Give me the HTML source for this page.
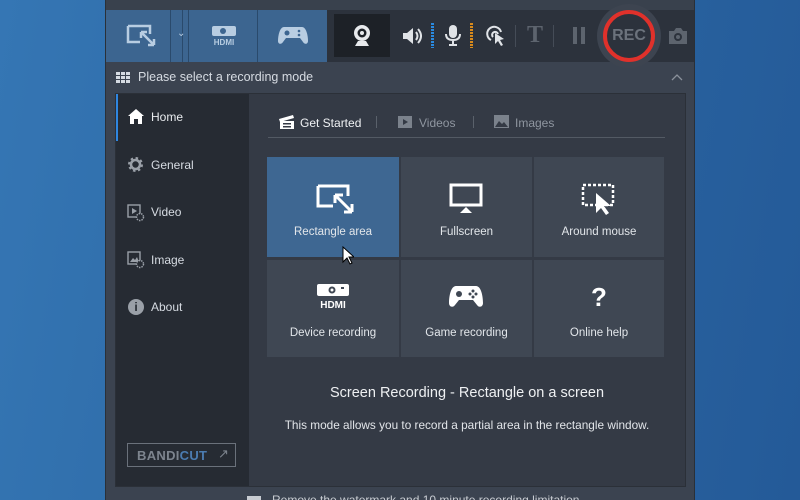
<!DOCTYPE html>
<html style="width:800px;height:500px;overflow:hidden"><head><meta charset="utf-8"><style>
*{margin:0;padding:0;box-sizing:border-box}
body{width:800px;height:500px;overflow:hidden;background:linear-gradient(100deg,#3576b4 0%,#2d6aa6 40%,#245a98 100%);font-family:"Liberation Sans",sans-serif;position:relative}
.a{position:absolute}
.t{color:#d6dbe2;font-size:12px}
.tile{position:absolute;background:#3f4753;color:#e2e6ea;font-size:11.5px;text-align:center}
.tile span{position:absolute;left:0;right:0}
</style></head><body>
<!-- window -->
<div class="a" style="left:105px;top:0;width:590px;height:500px;background:#3b4350;border-left:1px solid #2a3038;border-right:1px solid #2a3038"></div>
<div class="a" style="left:106px;top:0;width:588px;height:10px;background:#39414d"></div>
<!-- toolbar -->
<div class="a" style="left:106px;top:10px;width:588px;height:52px;background:#2c323c"></div>
<div class="a" style="left:106px;top:10px;width:221px;height:52px;background:#3c6590"></div>
<div class="a" style="left:170px;top:10px;width:1px;height:52px;background:#2a4a6c"></div>
<div class="a" style="left:182px;top:10px;width:1px;height:52px;background:#2a4a6c"></div>
<div class="a" style="left:188px;top:10px;width:1px;height:52px;background:#2a4a6c"></div>
<div class="a" style="left:257px;top:10px;width:1px;height:52px;background:#2a4a6c"></div>
<svg class="a" style="left:126px;top:24px" width="32" height="26" viewBox="0 0 32 26"><path d="M2 2h22v8M2 2v16h12" fill="none" stroke="#b8cde2" stroke-width="2.5"/><path d="M15 8l13 13M15 8h6M15 8v6M28 21h-6M28 21v-6" fill="none" stroke="#b8cde2" stroke-width="2.5"/></svg>
<div class="a" style="left:177px;top:28px;color:#b8cde2;font-size:10px">⌄</div>
<svg class="a" style="left:210px;top:26px" width="28" height="20" viewBox="0 0 28 20"><rect x="2" y="0" width="24" height="10" rx="2" fill="#b8cde2"/><circle cx="13" cy="5" r="3" fill="#3c6590"/><text x="14" y="19" font-size="8" font-weight="bold" fill="#b8cde2" text-anchor="middle" font-family="Liberation Sans">HDMI</text></svg>
<svg class="a" style="left:278px;top:25px" width="30" height="20" viewBox="0 0 30 20"><path d="M6 2h18c4 0 6 8 6 14 0 3-3 4-5 1l-3-4H8l-3 4c-2 3-5 2-5-1C0 10 2 2 6 2z" fill="#b8cde2"/><circle cx="9" cy="8" r="2.5" fill="#3c6590"/><circle cx="21" cy="6" r="1.3" fill="#3c6590"/><circle cx="21" cy="10" r="1.3" fill="#3c6590"/></svg>
<div class="a" style="left:334px;top:14px;width:56px;height:43px;background:#1d2127"></div>
<svg class="a" style="left:351px;top:24px" width="22" height="24" viewBox="0 0 22 24"><circle cx="11" cy="9" r="8" fill="#e8eaed"/><circle cx="11" cy="9" r="4.5" fill="#1d2127"/><circle cx="11" cy="9" r="2" fill="#e8eaed"/><path d="M4 22l3-5h8l3 5z" fill="#e8eaed"/></svg>
<svg class="a" style="left:402px;top:27px" width="20" height="18" viewBox="0 0 20 18"><path d="M1 6h4l6-5v16l-6-5H1z" fill="#e0e3e7"/><path d="M14 5q3 4 0 8M16 2q6 7 0 14" stroke="#e0e3e7" stroke-width="2" fill="none"/></svg>
<div class="a" style="left:431px;top:23px;width:3px;height:25px;background:repeating-linear-gradient(#2a8ae0 0 2px,#2c323c 2px 3px)"></div>
<svg class="a" style="left:444px;top:25px" width="18" height="22" viewBox="0 0 18 22"><rect x="5" y="0" width="8" height="13" rx="4" fill="#e0e3e7"/><path d="M2 9q0 6 7 6q7 0 7-6M9 15v4M5 20h8" stroke="#e0e3e7" stroke-width="2" fill="none"/></svg>
<div class="a" style="left:470px;top:23px;width:3px;height:25px;background:repeating-linear-gradient(#d88a1c 0 2px,#2c323c 2px 3px)"></div>
<svg class="a" style="left:485px;top:25px" width="22" height="22" viewBox="0 0 22 22"><path d="M6 15a7 7 0 1 1 10-8M8 12a3 3 0 1 1 5-3" stroke="#e0e3e7" stroke-width="2" fill="none"/><path d="M10 8l9 6-4 1 3 5-2 1-3-5-3 3z" fill="#e0e3e7"/></svg>
<div class="a" style="left:515px;top:25px;width:1px;height:22px;background:#454c57"></div>
<div class="a" style="left:527px;top:22px;color:#5d646e;font-size:24px;font-weight:bold;font-family:'Liberation Serif',serif">T</div>
<div class="a" style="left:553px;top:25px;width:1px;height:22px;background:#454c57"></div>
<div class="a" style="left:573px;top:27px;width:4px;height:17px;background:#5d646e"></div>
<div class="a" style="left:581px;top:27px;width:4px;height:17px;background:#5d646e"></div>
<div class="a" style="left:597px;top:4px;width:64px;height:64px;border-radius:50%;background:#3d4450"></div>
<div class="a" style="left:603px;top:10px;width:52px;height:52px;border-radius:50%;border:4px solid #e0312b;background:#2c323c"></div>
<div class="a" style="left:603px;top:27px;width:52px;text-align:center;color:#6b727c;font-size:16px;font-weight:bold">REC</div>
<svg class="a" style="left:667px;top:27px" width="22" height="18" viewBox="0 0 22 18"><path d="M2 4h5l2-3h5l2 3h4v13H2z" fill="#5d646e"/><circle cx="11" cy="10" r="4" fill="#2c323c"/><circle cx="11" cy="10" r="2" fill="#5d646e"/></svg>
<!-- header -->
<svg class="a" style="left:116px;top:72px" width="14" height="11"><g fill="#d6dbe2"><rect x="0" y="0" width="4" height="3"/><rect x="5" y="0" width="4" height="3"/><rect x="10" y="0" width="4" height="3"/><rect x="0" y="4" width="4" height="3"/><rect x="5" y="4" width="4" height="3"/><rect x="10" y="4" width="4" height="3"/><rect x="0" y="8" width="4" height="3"/><rect x="5" y="8" width="4" height="3"/><rect x="10" y="8" width="4" height="3"/></g></svg>
<div class="a t" style="left:138px;top:70px;font-size:12.5px">Please select a recording mode</div>
<svg class="a" style="left:671px;top:73px" width="12" height="8"><path d="M1 7l5-5 5 5" stroke="#8a919b" stroke-width="1.3" fill="none"/></svg>
<!-- panel -->
<div class="a" style="left:115px;top:93px;width:571px;height:394px;background:#343a45;border:1px solid #2b3038"></div>
<div class="a" style="left:116px;top:94px;width:133px;height:392px;background:#262b33"></div>
<div class="a" style="left:116px;top:94px;width:2px;height:47px;background:#2f86e0"></div>
<svg class="a" style="left:128px;top:109px" width="16" height="15" viewBox="0 0 16 15"><path d="M8 0l8 7h-2v8h-4v-5H6v5H2V7H0z" fill="#fff"/></svg>
<div class="a t" style="left:151px;top:110px;color:#e8ebee">Home</div>
<svg class="a" style="left:127px;top:156px" width="17" height="17" viewBox="0 0 17 17"><circle cx="8.5" cy="8.5" r="6" fill="none" stroke="#9aa0a8" stroke-width="3" stroke-dasharray="2.3 2.4"/><circle cx="8.5" cy="8.5" r="4.5" fill="none" stroke="#9aa0a8" stroke-width="2.5"/></svg>
<div class="a t" style="left:151px;top:158px">General</div>
<svg class="a" style="left:127px;top:204px" width="18" height="18" viewBox="0 0 18 18"><rect x="1" y="1" width="12" height="12" fill="none" stroke="#9aa0a8" stroke-width="1.4"/><path d="M5 4l5 3-5 3z" fill="#9aa0a8"/><circle cx="13" cy="13" r="3.5" fill="#262b33" stroke="#9aa0a8" stroke-width="1.5" stroke-dasharray="1.5 1"/></svg>
<div class="a t" style="left:151px;top:205px">Video</div>
<svg class="a" style="left:127px;top:251px" width="18" height="18" viewBox="0 0 18 18"><rect x="1" y="1" width="12" height="12" fill="none" stroke="#9aa0a8" stroke-width="1.4"/><path d="M3 11l3-4 2 2 2-3 2 5z" fill="#9aa0a8"/><circle cx="13" cy="13" r="3.5" fill="#262b33" stroke="#9aa0a8" stroke-width="1.5" stroke-dasharray="1.5 1"/></svg>
<div class="a t" style="left:151px;top:253px">Image</div>
<div class="a" style="left:128px;top:299px;width:16px;height:16px;border-radius:50%;background:#9aa0a8;color:#262b33;font-size:12px;font-weight:bold;text-align:center;line-height:16px">i</div>
<div class="a t" style="left:151px;top:300px">About</div>
<div class="a" style="left:127px;top:443px;width:109px;height:24px;border:1px solid #6a717b"></div>
<div class="a" style="left:137px;top:448px;font-size:13px;font-weight:bold;color:#7d848e;letter-spacing:0.3px">BANDI<span style="color:#4b7bb0">CUT</span></div>
<div class="a" style="left:218px;top:446px;font-size:13px;color:#7d848e">↗</div>
<!-- tabs -->
<svg class="a" style="left:279px;top:115px" width="16" height="14" viewBox="0 0 16 14"><path d="M0 4l14-4 1 3-14 4z" fill="#fff"/><rect x="1" y="6" width="14" height="8" fill="#fff"/><rect x="4" y="8" width="8" height="1.5" fill="#343a45"/><rect x="4" y="11" width="8" height="1.5" fill="#343a45"/></svg>
<div class="a" style="left:300px;top:116px;color:#f0f2f4;font-size:12px">Get Started</div>
<div class="a" style="left:376px;top:116px;width:1px;height:12px;background:#5a616b"></div>
<svg class="a" style="left:398px;top:116px" width="14" height="12"><rect width="14" height="12" fill="#7b828c"/><path d="M5 3l5 3-5 3z" fill="#343a45"/></svg>
<div class="a" style="left:419px;top:116px;color:#8f96a0;font-size:12px">Videos</div>
<div class="a" style="left:473px;top:116px;width:1px;height:12px;background:#5a616b"></div>
<svg class="a" style="left:494px;top:115px" width="15" height="13"><rect width="15" height="13" fill="#7b828c"/><path d="M1 12l4-6 3 3 2-2 4 5z" fill="#343a45"/></svg>
<div class="a" style="left:515px;top:116px;color:#8f96a0;font-size:12px">Images</div>
<div class="a" style="left:268px;top:137px;width:397px;height:1px;background:#535a64"></div>
<!-- tiles -->
<div class="tile" style="left:267px;top:157px;width:132px;height:100px;background:#3e6792"><span style="top:69px">Rectangle area</span>
<svg class="a" style="left:48px;top:26px" width="40" height="32" viewBox="0 0 40 32"><path d="M3 3h30v10M3 3v20h15" fill="none" stroke="#fff" stroke-width="3"/><path d="M20 12l17 17M20 12h8M20 12v8M37 29h-8M37 29v-8" fill="none" stroke="#fff" stroke-width="3"/></svg></div>
<div class="tile" style="left:401px;top:157px;width:131px;height:100px"><span style="top:69px">Fullscreen</span>
<svg class="a" style="left:48px;top:26px" width="34" height="32" viewBox="0 0 34 32"><rect x="2" y="2" width="30" height="20" fill="none" stroke="#fff" stroke-width="3"/><path d="M11 30l6-6 6 6z" fill="#fff"/></svg></div>
<div class="tile" style="left:534px;top:157px;width:130px;height:100px"><span style="top:69px">Around mouse</span>
<svg class="a" style="left:47px;top:26px" width="36" height="32" viewBox="0 0 36 32"><rect x="2" y="2" width="30" height="20" fill="none" stroke="#fff" stroke-width="2.5" stroke-dasharray="3 2"/><path d="M15 10v20l5-5 5 7 3-2-5-7h7z" fill="#fff"/></svg></div>
<div class="tile" style="left:267px;top:260px;width:132px;height:97px"><span style="top:67px">Device recording</span>
<svg class="a" style="left:49px;top:24px" width="34" height="26" viewBox="0 0 34 26"><rect x="1" y="0" width="32" height="12" rx="2" fill="#fff"/><circle cx="16" cy="6" r="3.5" fill="#3f4753"/><circle cx="16" cy="6" r="1.5" fill="#fff"/><rect x="25" y="3" width="3" height="2" fill="#3f4753"/><text x="17" y="24" font-size="10" font-weight="bold" fill="#fff" text-anchor="middle" font-family="Liberation Sans">HDMI</text></svg></div>
<div class="tile" style="left:401px;top:260px;width:131px;height:97px"><span style="top:67px">Game recording</span>
<svg class="a" style="left:48px;top:25px" width="34" height="24" viewBox="0 0 34 24"><path d="M7 1h20c5 0 7 10 7 17 0 4-4 5-6 2l-4-5H10l-4 5c-2 3-6 2-6-2C0 11 2 1 7 1z" fill="#fff"/><circle cx="10" cy="9" r="3" fill="#3f4753"/><circle cx="24" cy="6" r="1.5" fill="#3f4753"/><circle cx="24" cy="12" r="1.5" fill="#3f4753"/><circle cx="21" cy="9" r="1.5" fill="#3f4753"/><circle cx="27" cy="9" r="1.5" fill="#3f4753"/></svg></div>
<div class="tile" style="left:534px;top:260px;width:130px;height:97px"><span style="top:67px">Online help</span>
<div class="a" style="left:0;right:0;top:22px;font-size:26px;font-weight:bold;color:#fff">?</div></div>
<svg class="a" style="left:342px;top:246px" width="12" height="19" viewBox="0 0 12 19"><path d="M1 1v15l4-4 3 6 2-1-3-6h5z" fill="#fff" stroke="#000" stroke-width="1"/></svg>
<div class="a" style="left:249px;top:385px;width:436px;text-align:center;color:#eef0f2;font-size:14.5px">Screen Recording - Rectangle on a screen</div>
<div class="a" style="left:249px;top:418px;width:436px;text-align:center;color:#e2e5e9;font-size:11.8px">This mode allows you to record a partial area in the rectangle window.</div>
<!-- bottom -->
<div class="a" style="left:247px;top:496px;width:14px;height:4px;background:#c8ccd2"></div>
<div class="a" style="left:0;top:0;width:800px;height:500px;overflow:hidden;pointer-events:none"><div class="a" style="left:272px;top:493px;color:#c8ccd2;font-size:12px;white-space:nowrap">Remove the watermark and 10 minute recording limitation</div></div>
</body></html>
